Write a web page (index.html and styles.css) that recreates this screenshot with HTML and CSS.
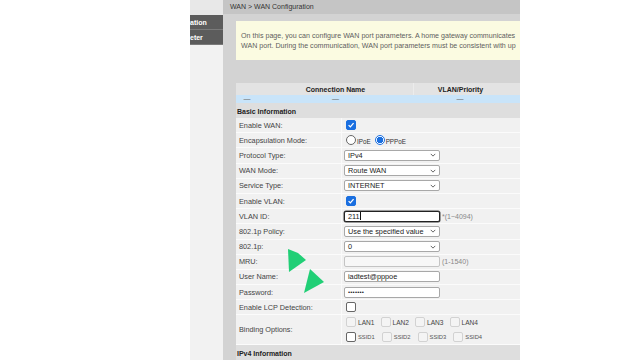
FILE: index.html
```html
<!DOCTYPE html>
<html lang="en">
<head>
    <meta charset="UTF-8">
    <title>WAN Configuration</title>
    <link rel="stylesheet" href="styles.css">
</head>
<body>
  <div class="page">
    <div class="blank"></div>
    <div class="sidebar">
        <div class="side_top"></div>
        <div class="menu_item">ation</div>
        <div class="menu_item">eter</div>
    </div>
    <div class="main">
        <div class="crumb">WAN &gt; WAN Configuration</div>
        <div class="content">
            <div class="notice">
                On this page, you can configure WAN port parameters. A home gateway communicates<br>
                WAN port. During the communication, WAN port parameters must be consistent with up
            </div>

            <div class="list">
                <div class="list_head">
                    <div class="c1"></div>
                    <div class="c2">Connection Name</div>
                    <div class="c3">VLAN/Priority</div>
                    <div class="c4"></div>
                </div>
                <div class="list_row">
                    <div class="c1">—</div>
                    <div class="c2">—</div>
                    <div class="c3">—</div>
                    <div class="c4"></div>
                </div>
            </div>

            <div class="section">Basic Information</div>
            <div class="form">
                <div class="row">
                    <div class="label">Enable WAN:</div>
                    <div class="value"><span class="check on"><svg viewBox="0 0 10 10"><path d="M2 5.2 L4.2 7.4 L8.2 2.6" /></svg></span></div>
                </div>
                <div class="row">
                    <div class="label">Encapsulation Mode:</div>
                    <div class="value">
                        <span class="radio"></span><span class="opt">IPoE</span>
                        <span class="radio on"></span><span class="opt">PPPoE</span>
                    </div>
                </div>
                <div class="row">
                    <div class="label">Protocol Type:</div>
                    <div class="value"><div class="select"><span>IPv4</span><svg viewBox="0 0 8 5"><path d="M1 1 L4 4 L7 1" /></svg></div></div>
                </div>
                <div class="row">
                    <div class="label">WAN Mode:</div>
                    <div class="value"><div class="select"><span>Route WAN</span><svg viewBox="0 0 8 5"><path d="M1 1 L4 4 L7 1" /></svg></div></div>
                </div>
                <div class="row">
                    <div class="label">Service Type:</div>
                    <div class="value"><div class="select"><span>INTERNET</span><svg viewBox="0 0 8 5"><path d="M1 1 L4 4 L7 1" /></svg></div></div>
                </div>
                <div class="row">
                    <div class="label">Enable VLAN:</div>
                    <div class="value"><span class="check on"><svg viewBox="0 0 10 10"><path d="M2 5.2 L4.2 7.4 L8.2 2.6" /></svg></span></div>
                </div>
                <div class="row">
                    <div class="label">VLAN ID:</div>
                    <div class="value"><div class="input focus">211<span class="caret"></span></div><span class="hint">*(1~4094)</span></div>
                </div>
                <div class="row">
                    <div class="label">802.1p Policy:</div>
                    <div class="value"><div class="select"><span>Use the specified value</span><svg viewBox="0 0 8 5"><path d="M1 1 L4 4 L7 1" /></svg></div></div>
                </div>
                <div class="row">
                    <div class="label">802.1p:</div>
                    <div class="value"><div class="select"><span>0</span><svg viewBox="0 0 8 5"><path d="M1 1 L4 4 L7 1" /></svg></div></div>
                </div>
                <div class="row">
                    <div class="label">MRU:</div>
                    <div class="value"><div class="input off"></div><span class="hint">(1-1540)</span></div>
                </div>
                <div class="row">
                    <div class="label">User Name:</div>
                    <div class="value"><div class="input">iadtest@pppoe</div></div>
                </div>
                <div class="row">
                    <div class="label">Password:</div>
                    <div class="value"><div class="input dots">•••••••</div></div>
                </div>
                <div class="row">
                    <div class="label">Enable LCP Detection:</div>
                    <div class="value"><span class="check"></span></div>
                </div>
                <div class="row tall">
                    <div class="label">Binding Options:</div>
                    <div class="value binds">
                        <div class="bind_line">
                            <span class="check dis"></span><span class="bind">LAN1</span>
                            <span class="check dis"></span><span class="bind">LAN2</span>
                            <span class="check dis"></span><span class="bind">LAN3</span>
                            <span class="check dis"></span><span class="bind">LAN4</span>
                        </div>
                        <div class="bind_line">
                            <span class="check"></span><span class="bind ssid">SSID1</span>
                            <span class="check dis"></span><span class="bind ssid">SSID2</span>
                            <span class="check dis"></span><span class="bind ssid">SSID3</span>
                            <span class="check dis"></span><span class="bind ssid">SSID4</span>
                        </div>
                    </div>
                </div>
            </div>
            <div class="section">IPv4 Information</div>
        </div>
    </div>
  </div>

  <svg class="marks" viewBox="0 0 40 48" width="40" height="48">
      <polygon points="2,1 12,5 20,12 3,24" />
      <polygon points="24,21 38,34 18,45" />
  </svg>
</body>
</html>
```

FILE: styles.css
```css
*{
  margin:0;
  padding:0;
  box-sizing: border-box;
}
body{
  background: #fff;
  font-family: "Liberation Sans", Arial, sans-serif;
  color: #333;
  width: 640px;
  height: 360px;
  overflow: hidden;
  position: relative;
}
.page{
  display: flex;
  height: 360px;
}
.blank{
  width: 190px;
}
.sidebar{
  width: 33px;
  background: #f2f2f2;
  overflow: hidden;
}
.side_top{
  height: 15px;
  background: #e8e8e8;
}
.menu_item{
  height: 15px;
  line-height: 15px;
  background: #5c5c5c;
  color: #fff;
  font-size: 7px;
  font-weight: bold;
  border-bottom: 1px solid #7a7a7a;
  white-space: nowrap;
}
.main{
  width: 297px;
  background: #d3d3d3;
  overflow: hidden;
  display: flex;
  flex-direction: column;
}
.crumb{
  height: 14px;
  line-height: 14px;
  background: #c5c5c5;
  color: #333;
  font-size: 7px;
  padding-left: 7px;
  white-space: nowrap;
}
.content{
  padding: 7px 0 0 13px;
  width: 420px;
}
.notice{
  height: 39px;
  background: #fbfbe1;
  color: #5e5e5e;
  font-size: 7.1px;
  line-height: 10px;
  padding: 10px 0 0 5px;
  white-space: nowrap;
}
.list{
  margin-top: 23px;
  font-size: 7px;
}
.list_head, .list_row{
  display: flex;
}
.list_head{
  height: 12px;
  line-height: 13px;
  background: #e3e3e3;
  font-weight: bold;
  color: #222;
}
.list_row{
  height: 8px;
  line-height: 8px;
  background: #c9e4f9;
  color: #666;
  font-size: 7px;
}
.c1{ width: 22px; text-align: center; }
.c2{ width: 155px; text-align: center; }
.c3{ width: 94px; text-align: center; border-left: 1px solid #ececec; }
.c4{ width: 120px; }
.list_row .c3{ border-left: none; }
.section{
  height: 15px;
  line-height: 17px;
  background: #dedede;
  font-size: 7px;
  font-weight: bold;
  color: #222;
  padding-left: 1px;
}
.form{
  font-size: 7.3px;
}
.row{
  display: flex;
  height: 15.2px;
  background: #f1f1f1;
  border-bottom: 1px solid #fbfbfb;
}
.row.tall{
  height: 30px;
}
.label{
  width: 105px;
  padding-left: 3px;
  display: flex;
  align-items: center;
  color: #444;
  white-space: nowrap;
}
.value{
  flex: 1;
  display: flex;
  align-items: center;
  padding-left: 2px;
  border-left: 1px solid #fafafa;
}
.check{
  width: 10px;
  height: 10px;
  margin-left: 2px;
  border: 1px solid #666;
  border-radius: 2px;
  background: #fff;
  display: inline-flex;
}
.check svg{
  width: 100%;
  height: 100%;
  fill: none;
  stroke: #fff;
  stroke-width: 1.6;
}
.check.on{
  background: #1a6fe0;
  border-color: #1a6fe0;
}
.check.dis{
  border-color: #d2d2d2;
  background: #f4f4f4;
}
.radio{
  width: 10px;
  height: 10px;
  margin-left: 2px;
  border: 1px solid #666;
  border-radius: 50%;
  background: #fff;
}
.radio.on{
  border: 1px solid #1a6fe0;
  background: radial-gradient(circle, #1a6fe0 0 3px, #fff 3.4px);
}
.opt{
  font-size: 6.3px;
  color: #333;
  margin: 2px 2px 0 1px;
}
.select, .input{
  width: 96px;
  height: 11px;
  border: 1px solid #a8a8a8;
  border-radius: 2px;
  background: #fff;
  display: flex;
  align-items: center;
  padding: 0 3px;
  color: #222;
  white-space: nowrap;
}
.select span{
  flex: 1;
}
.select svg{
  width: 6px;
  height: 4px;
  fill: none;
  stroke: #555;
  stroke-width: 1.2;
}
.input.focus{
  border: 1px solid #222;
  box-shadow: 0 0 0 0.5px #444;
}
.caret{
  width: 1px;
  height: 8px;
  background: #111;
}
.input.off{
  background: #f7f7f7;
  border-color: #c4c4c4;
}
.dots{
  font-size: 6px;
  letter-spacing: 0.2px;
}
.hint{
  color: #888;
  font-size: 7px;
  margin-left: 2px;
  white-space: nowrap;
}
.binds{
  flex-direction: column;
  align-items: flex-start;
  justify-content: center;
  gap: 5px;
}
.bind_line{
  display: flex;
  align-items: center;
}
.bind{
  font-size: 6.6px;
  color: #444;
  margin: 0 4px 0 2px;
}
.bind.ssid{
  font-size: 5.8px;
  color: #555;
  margin-right: 5px;
}
.marks{
  position: absolute;
  left: 286px;
  top: 248px;
  fill: #21cf76;
}
```
